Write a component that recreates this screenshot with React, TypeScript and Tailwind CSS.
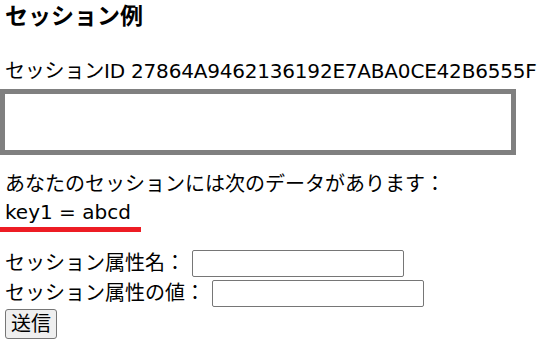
const font = {
  fontFamily: '"DejaVu Sans", "Noto Sans CJK JP", sans-serif',
};

export default function App() {
  return (
    <div
      className="w-[558px] h-[352px] bg-white text-black overflow-hidden text-[20px] pl-[5px]"
      style={font}
    >
      <h3 className="text-[23px] font-bold leading-[32px] h-[32px]">
        セッション例
      </h3>

      <p className="mt-[25px] leading-[28px] whitespace-nowrap tracking-[-0.2px]">
        セッションID 27864A9462136192E7ABA0CE42B6555F
      </p>

      <div className="-ml-[5px] mt-[4px] w-[516px] h-[66px] border-[5px] border-[#808080]"></div>

      <p className="mt-[15px] leading-[28px] whitespace-nowrap">
        あなたのセッションには次のデータがあります：
      </p>
      <p className="leading-[28px] whitespace-nowrap">key1 = abcd</p>
      <div className="-ml-[5px] mt-[1px] w-[141px] h-[5px] bg-[#ed1c24]"></div>

      <form className="mt-[18px] flex flex-col">
        <div className="flex items-center h-[27px]">
          <label className="leading-[27px] whitespace-nowrap">
            セッション属性名：
          </label>
          <input
            type="text"
            className="ml-[7px] w-[212px] h-[27px] border border-[#767676] rounded-[2px] bg-white"
          />
        </div>
        <div className="flex items-center h-[27px] mt-[3px]">
          <label className="leading-[27px] whitespace-nowrap">
            セッション属性の値：
          </label>
          <input
            type="text"
            className="ml-[7px] w-[212px] h-[27px] border border-[#767676] rounded-[2px] bg-white"
          />
        </div>
        <div className="mt-[2px]">
          <button
            type="button"
            className="w-[52px] h-[30px] border border-[#767676] rounded-[3px] bg-[#efefef] text-[20px] leading-[28px]"
          >
            送信
          </button>
        </div>
      </form>
    </div>
  );
}
